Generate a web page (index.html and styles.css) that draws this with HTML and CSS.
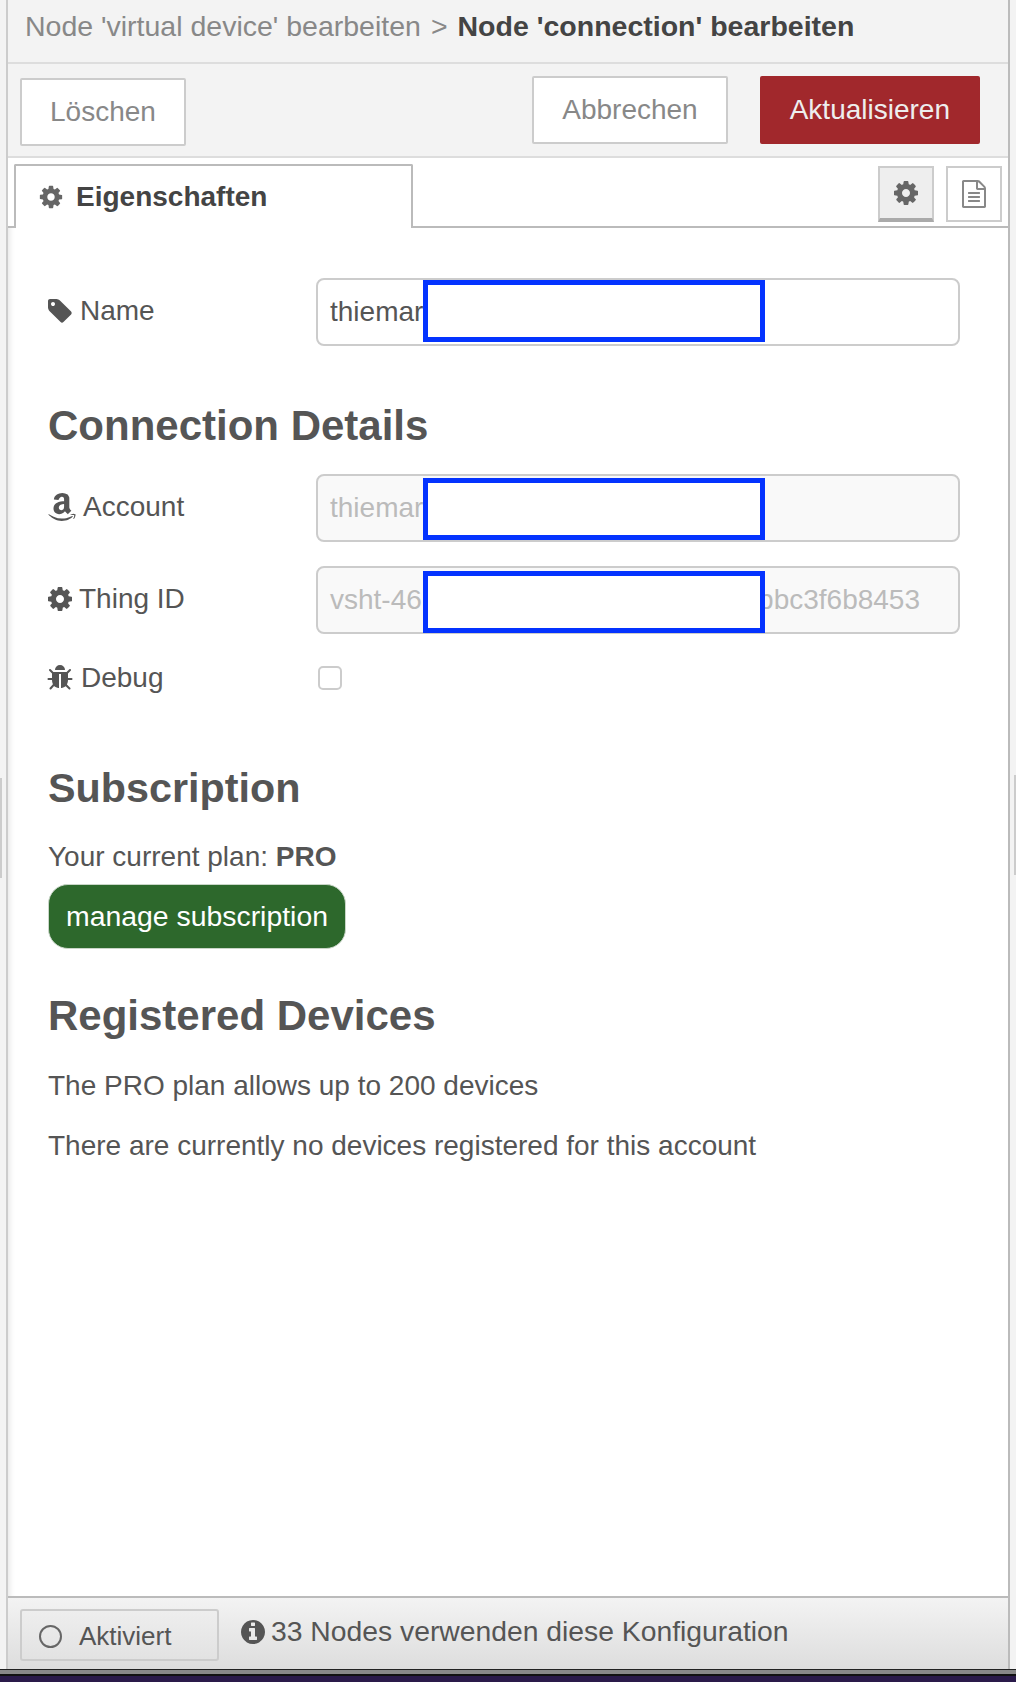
FILE: index.html
```html
<!DOCTYPE html>
<html lang="de">
<head>
	<meta charset="UTF-8">
	<title>Node 'connection' bearbeiten</title>
	<link rel="stylesheet" href="styles.css">
</head>
<body>
	<svg class="defs" width="0" height="0">
		<symbol id="i-cog" viewBox="0 0 1792 1792"><path d="M1152 896q0-106-75-181t-181-75-181 75-75 181 75 181 181 75 181-75 75-181zm512-109v222q0 12-8 23t-20 13l-185 28q-19 54-39 91 35 50 107 138 10 12 10 25t-9 23q-27 37-99 108t-94 71q-12 0-26-9l-138-108q-44 23-91 38-16 136-29 186-7 28-36 28h-222q-14 0-24.500-8.500t-11.500-21.500l-28-184q-49-16-90-37l-141 107q-10 9-25 9-14 0-25-11-126-114-165-168-7-10-7-23 0-12 8-23 15-21 51-66.500t54-70.500q-27-50-41-99l-183-27q-13-2-21-12.500t-8-23.500v-222q0-12 8-23t19-13l186-28q14-46 39-92-40-57-107-138-10-12-10-24 0-10 9-23 26-36 98.500-107.500t94.500-71.500q13 0 26 10l138 107q44-23 91-38 16-136 29-186 7-28 36-28h222q14 0 24.500 8.500t11.500 21.500l28 184q49 16 90 37l142-107q9-9 24-9 13 0 25 10 129 119 165 170 7 8 7 22 0 12-8 23-15 21-51 66.500t-54 70.500q26 50 41 98l183 28q13 2 21 12.500t8 23.500z"/></symbol>
		<symbol id="i-tag" viewBox="0 0 1792 1792"><path d="M576 448q0-53-37.500-90.500t-90.500-37.500-90.500 37.500-37.500 90.500 37.500 90.500 90.500 37.500 90.500-37.500 37.500-90.500zm1067 576q0 53-37 90l-491 492q-39 37-91 37-53 0-90-37l-715-716q-38-37-64.500-101t-26.500-117v-416q0-52 38-90t90-38h416q53 0 117 26.500t102 64.500l715 714q37 39 37 91z"/></symbol>
		<symbol id="i-bug" viewBox="0 0 1792 1792"><path d="M1696 960q0 26-19 45t-45 19h-224q0 171-67 290l208 209q19 19 19 45t-19 45q-18 19-45 19t-45-19l-198-197q-5 5-15 13t-42 28.500-65 36.500-82 29-97 13v-896h-128v896q-51 0-101.500-13.500t-87-33-66-39-43.500-32.500l-15-14-183 207q-20 21-48 21-24 0-43-16-19-18-20.500-44.500t15.500-46.500l202-227q-58-114-58-274h-224q-26 0-45-19t-19-45 19-45 45-19h224v-294l-173-173q-19-19-19-45t19-45 45-19 45 19l173 173h844l173-173q19-19 45-19t45 19 19 45-19 45l-173 173v294h224q26 0 45 19t19 45zm-480-576h-640q0-133 93.500-226.500t226.500-93.500 226.500 93.500 93.500 226.500z"/></symbol>
		<symbol id="i-amazon" viewBox="0 0 1792 1792"><path d="M1551 1476q15-6 26-3t11 17.500-15 33.500q-13 16-44 43.500t-95.500 68-141 74-188 58-229.500 24.500q-119 0-238-31t-209-76.500-172.500-104-132.500-105-84-87.500q-8-9-10-16.500t1-12 8-7 11.500-2 11.500 4.500q192 117 300 166 389 176 799 90 190-40 391-135zm207-115q11 16 2.500 69.500t-28.500 102.500q-34 83-85 124-17 14-26 9t0-24q21-45 44.500-121.500t6.500-98.500q-5-7-15.500-11.500t-27-6-29.500-2.500-35 0-31.500 2-31 3-22.500 2q-6 1-13 1.500t-11 1-8.500 1-7 .5h-10l-3-.5-2-1.500-1.500-3q-6-16 47-40t103-30q46-7 108-1t76 24zm-394-443q0 31 13.500 64t32 58 37.500 46 33 32l13 11-227 224q-40-37-79-75.500t-58-58.500l-19-20q-11-11-25-33-38 59-97.500 102.500t-127.500 63.500-140 23-137.500-21-117.500-65.500-83-113-31-162.500q0-84 28-154t72-116.500 106.500-83 122.500-57 130-34.500 119.500-18.500 99.500-6.500v-127q0-65-21-97-34-53-121-53-6 0-16.500 1t-40.500 12-56 29.500-56 59.500-48 96l-294-27q0-60 22-119t67-113 108-95 151.500-65.500 190.500-24.500q100 0 181 25t129.500 61.500 81 83 45 86 12.500 73.500v589zm-672 21q0 86 70 133 66 44 139 22 84-25 114-123 14-45 14-101v-162q-59 2-111 12t-106.500 33.500-87 71-32.500 114.500z"/></symbol>
		<symbol id="i-info" viewBox="0 0 1792 1792"><path d="M1152 1376v-160q0-14-9-23t-23-9h-96v-512q0-14-9-23t-23-9h-320q-14 0-23 9t-9 23v160q0 14 9 23t23 9h96v320h-96q-14 0-23 9t-9 23v160q0 14 9 23t23 9h448q14 0 23-9t9-23zm-128-896v-160q0-14-9-23t-23-9h-192q-14 0-23 9t-9 23v160q0 14 9 23t23 9h192q14 0 23-9t9-23zm640 416q0 209-103 385.500t-279.500 279.500-385.500 103-385.500-103-279.500-279.500-103-385.500 103-385.500 279.500-279.500 385.500-103 385.500 103 279.500 279.500 103 385.500z"/></symbol>
		<symbol id="i-file" viewBox="0 0 1792 1792"><path d="M1596 380q28 28 48 76t20 88v1152q0 40-28 68t-68 28h-1344q-40 0-68-28t-28-68v-1600q0-40 28-68t68-28h896q40 0 88 20t76 48zm-444-244v376h376q-10-29-22-41l-313-313q-12-12-41-22zm384 1528v-1024h-416q-40 0-68-28t-28-68v-416h-768v1536h1280zm-1024-864q0-14 9-23t23-9h704q14 0 23 9t9 23v64q0 14-9 23t-23 9h-704q-14 0-23-9t-9-23v-64zm736 224q14 0 23 9t9 23v64q0 14-9 23t-23 9h-704q-14 0-23-9t-9-23v-64q0-14 9-23t23-9h704zm0 256q14 0 23 9t9 23v64q0 14-9 23t-23 9h-704q-14 0-23-9t-9-23v-64q0-14 9-23t23-9h704z"/></symbol>
	</svg>

	<div class="handle handle-left"></div>
	<div class="handle handle-right"></div>

	<div class="tray">
		<div class="tray-title">
			<span class="crumb">Node 'virtual device' bearbeiten</span>
			<span class="crumb-sep">&gt;</span>
			<span class="crumb-now">Node 'connection' bearbeiten</span>
		</div>

		<div class="tray-toolbar">
			<a class="btn btn-delete" href="#">Löschen</a>
			<div class="toolbar-right">
				<a class="btn" href="#">Abbrechen</a>
				<a class="btn btn-primary" href="#">Aktualisieren</a>
			</div>
		</div>

		<div class="tabs">
			<div class="tab"><svg class="icon icon-tab"><use href="#i-cog"/></svg>Eigenschaften</div>
			<div class="tab-links">
				<a class="tab-link selected" href="#"><svg class="icon"><use href="#i-cog"/></svg></a>
				<a class="tab-link" href="#"><svg class="icon"><use href="#i-file"/></svg></a>
			</div>
		</div>

		<div class="tray-body">
			<div class="form-row">
				<label><svg class="icon"><use href="#i-tag"/></svg>Name</label>
				<div class="field">
					<div class="input">thiemar</div>
					<div class="redact"></div>
				</div>
			</div>

			<h3 class="h-connection">Connection Details</h3>

			<div class="form-row row-account">
				<label><svg class="icon icon-amazon"><use href="#i-amazon"/></svg>Account</label>
				<div class="field">
					<div class="input disabled">thiemar</div>
					<div class="redact"></div>
				</div>
			</div>
			<div class="form-row row-thing">
				<label><svg class="icon"><use href="#i-cog"/></svg>Thing ID</label>
				<div class="field">
					<div class="input disabled id-value"><span>vsht-46</span><span>bbc3f6b8453</span></div>
					<div class="redact"></div>
				</div>
			</div>
			<div class="form-row row-debug">
				<label><svg class="icon"><use href="#i-bug"/></svg>Debug</label>
				<span class="checkbox"></span>
			</div>

			<h3 class="h-subscription">Subscription</h3>
			<p class="plan">Your current plan: <b>PRO</b></p>
			<a class="btn-manage" href="#">manage subscription</a>

			<h3 class="h-devices">Registered Devices</h3>
			<p class="devices-limit">The PRO plan allows up to 200 devices</p>
			<p class="devices-none">There are currently no devices registered for this account</p>
		</div>

		<div class="tray-footer">
			<div class="toggle"><span class="toggle-dot"></span>Aktiviert</div>
			<div class="users"><svg class="icon"><use href="#i-info"/></svg>33 Nodes verwenden diese Konfiguration</div>
		</div>
	</div>

	<div class="desk-edge"></div>
</body>
</html>
```

FILE: styles.css
```css
* { box-sizing: border-box; padding: 0; margin: 0; }
html, body { height: 100%; }
body { background: #f3f3f3; font-family: "Liberation Sans", Arial, sans-serif; font-size: 28px; color: #555; display: flex; flex-direction: column; overflow: hidden; }
a { text-decoration: none; }
.defs { position: absolute; }
.icon { width: 28px; height: 28px; fill: currentColor; flex: none; }

.handle { position: absolute; width: 2px; height: 100px; background: #ccc; }
.handle-left { top: 778px; left: 0; }
.handle-right { top: 775px; right: 0; }

.tray { height: 1669px; margin: 0 6px; border-left: 2px solid #ccc; border-right: 2px solid #bbb; background: #fff; display: flex; flex-direction: column; flex: none; }

.tray-title { height: 64px; padding: 0 17px 10px; background: #f3f3f3; border-bottom: 2px solid #ddd; display: flex; align-items: center; gap: 10px; font-size: 28.5px; white-space: nowrap; flex: none; }
.crumb, .crumb-sep { color: #888; }
.crumb-now { color: #444; font-weight: bold; }

.tray-toolbar { height: 94px; padding: 0 28px 0 12px; background: #f3f3f3; border-bottom: 2px solid #ddd; display: flex; align-items: center; justify-content: space-between; flex: none; }
.toolbar-right { display: flex; gap: 32px; }
.btn { height: 68px; padding: 0 28px; background: #fff; border: 2px solid #ccc; border-radius: 2px; color: #888; display: flex; align-items: center; }
.btn-delete { margin-top: 4px; }
.btn-primary { background: #a1282c; border-color: #a1282c; color: #eee; }

.tabs { height: 70px; padding: 6px 6px 0 6px; border-bottom: 2px solid #bbb; display: flex; justify-content: space-between; flex: none; }
.tab { width: 399px; height: 64px; padding-left: 22px; background: #fff; border: 2px solid #bbb; border-bottom: none; border-radius: 2px 2px 0 0; color: #444; font-weight: bold; display: flex; align-items: center; gap: 12px; }
.icon-tab { color: #666; width: 26px; height: 26px; }
.tab-links { display: flex; gap: 12px; padding: 2px 0 0; }
.tab-link { width: 56px; height: 56px; background: #fff; border: 2px solid #ccc; color: #888; display: flex; align-items: center; justify-content: center; }
.tab-link.selected { background: #eee; border-bottom: 4px solid #aaa; color: #666; }

.tray-body { flex: 1; padding: 50px 48px 0 40px; box-shadow: inset 7px 0 6px -6px rgba(0, 0, 0, .12); }
.form-row { display: flex; align-items: center; height: 68px; margin-bottom: 24px; }
.form-row label { width: 268px; margin-bottom: 2px; display: flex; align-items: center; gap: 6px; flex: none; }
.form-row label .icon { margin-left: -2px; }
.field { position: relative; width: 644px; height: 68px; }
.input { height: 68px; padding: 0 12px; background: #fff; border: 2px solid #ccc; border-radius: 8px; color: #555; display: flex; align-items: center; overflow: hidden; white-space: nowrap; }
.input.disabled { background: #f9f9f9; color: #bbb; }
.id-value { justify-content: space-between; padding-right: 38px; }
.redact { position: absolute; top: 2px; left: 107px; width: 342px; height: 62px; background: #fff; border: 5px solid #0433ff; }

.row-account label { gap: 7px; }
.row-account label .icon { margin-left: 0; }
.row-account .redact { top: 4px; }
.row-thing { margin-bottom: 32px; }
.row-thing label { gap: 5px; }
.row-thing .redact { top: 5px; }
.row-debug { height: 24px; margin: 0; }
.row-debug label { margin-bottom: 0; gap: 7px; }
.checkbox { width: 24px; height: 24px; margin-left: 2px; background: #fff; border: 2px solid #ccc; border-radius: 5px; }

h3 { font-size: 42px; line-height: 46px; color: #555; font-weight: bold; }
.h-connection { margin: 57px 0 25px; }
.h-subscription { margin-top: 75px; font-size: 41.3px; }
.plan { margin-top: 31px; line-height: 30px; }
.btn-manage { display: block; width: 298px; height: 65px; margin-top: 12px; line-height: 63px; background: #2d682c; border: 1px solid #c9d6c8; border-radius: 20px; color: #fff; font-size: 28.4px; text-align: center; }
.h-devices { margin-top: 44px; }
.devices-limit { margin-top: 32px; line-height: 30px; }
.devices-none { margin-top: 30px; line-height: 30px; }

.tray-footer { height: 73px; padding: 0 0 0 12px; background: linear-gradient(#f3f3f3, #ddd); border-top: 2px solid #bbb; display: flex; align-items: center; gap: 20px; font-size: 28.3px; flex: none; }
.toggle { width: 199px; height: 52px; margin-top: 3px; padding: 2px 0 0 17px; background: linear-gradient(#eee, #e2e2e2); border: 2px solid #ccc; border-radius: 3px; font-size: 26px; display: flex; align-items: center; gap: 17px; }
.toggle-dot { width: 23px; height: 23px; border: 2px solid #666; border-radius: 50%; }
.users { display: flex; align-items: center; gap: 4px; margin-bottom: 4px; }

.desk-edge { flex: 1; background: linear-gradient(#222 0 1px, #888 1px 5px, #111 5px 7px, #2a1a4a 7px); }
```
